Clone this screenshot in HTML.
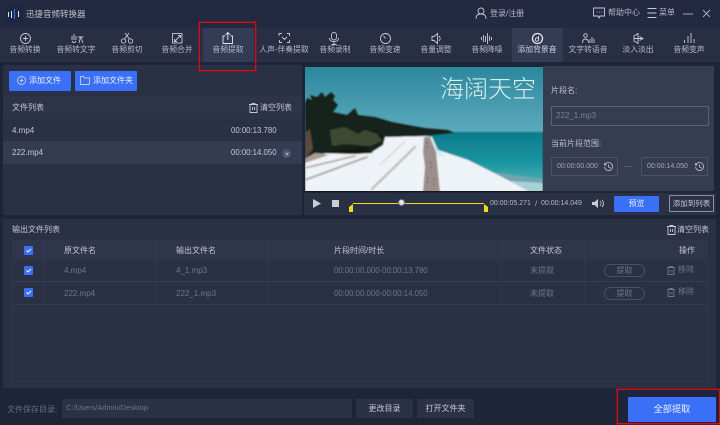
<!DOCTYPE html>
<html><head><meta charset="utf-8"><style>
*{box-sizing:border-box;margin:0;padding:0}
html,body{width:720px;height:425px;overflow:hidden;background:#1f2538}
body{position:relative;font-family:"Liberation Sans","Noto Sans CJK SC",sans-serif;font-size:8px;color:#c3c8d3}
.a{position:absolute;white-space:nowrap}
.b{position:absolute}
.t{position:absolute;top:44px;height:12px;line-height:12px;text-align:center;color:#b5bac6;transform:translateX(-50%);white-space:nowrap;font-size:7.8px}
svg{position:absolute;overflow:visible;fill:none;stroke:#c6cad4;stroke-width:.9}
.btn{position:absolute;background:#3a6ff7;color:#e8eeff;border-radius:1px;line-height:19px;font-size:8px}
.dim{color:#6f7689}
.vl{position:absolute;top:240px;width:1px;height:64px;background:#39405470}
.red{position:absolute;border:1px solid #d80c14;box-shadow:0 0 0 1px rgba(216,12,20,.35)}
</style></head><body>
<div class="b" style="left:0;top:0;width:720px;height:28px;background:#222940"></div>
<div class="b" style="left:0;top:28px;width:720px;height:34px;background:#282f45"></div>
<div class="b" style="left:5px;top:5px;width:18px;height:18px;background:#1c2744;border-radius:3px"></div>
<div class="b" style="left:8px;top:12px;width:1px;height:5px;background:#dfe3ec"></div>
<div class="b" style="left:11px;top:11px;width:1px;height:7px;background:#dfe3ec"></div>
<div class="b" style="left:14px;top:9px;width:1px;height:10px;background:#3a6ff7"></div>
<div class="b" style="left:18px;top:11px;width:1px;height:6px;background:#dfe3ec"></div>
<div class="a" style="left:26px;top:8px;line-height:12px;font-size:8.500px;color:#bdc2cd">迅捷音频转换器</div>
<svg style="left:475px;top:7px" width="12" height="13"><circle cx="6" cy="4" r="3"/><path d="M1 12c0-4 2-5 5-5s5 1 5 5"/></svg>
<div class="a" style="left:490px;top:8px;line-height:12px;color:#b5bac6">登录/注册</div>
<svg style="left:593px;top:7px" width="12" height="12"><path d="M.5 1h11v8H7l-1 2-1-2H.5z"/><path d="M3.500 5h1M6 5h1M8.500 5h1" stroke-width=".8"/></svg>
<div class="a" style="left:608px;top:7px;line-height:12px;color:#b5bac6">帮助中心</div>
<svg style="left:647px;top:8px" width="10" height="10"><path d="M.5 .5h9M.5 5h9M.5 9.500h9"/></svg>
<div class="a" style="left:659px;top:7px;line-height:12px;color:#b5bac6">菜单</div>
<svg style="left:683px;top:9px" width="34" height="10"><path d="M0 5h10M20 1l7 7M27 1l-7 7" stroke-width=".8"/></svg>

<div class="b" style="left:203px;top:28px;width:51px;height:34px;background:#343b54"></div>
<div class="b" style="left:512px;top:28px;width:51px;height:34px;background:#343b54"></div>
<div class="t" style="left:25px">音频转换</div><div class="t" style="left:76px">音频转文字</div><div class="t" style="left:127px">音频剪切</div><div class="t" style="left:177px">音频合并</div><div class="t" style="left:228px">音频提取</div><div class="t" style="left:284px">人声-伴奏提取</div><div class="t" style="left:335px">音频录制</div><div class="t" style="left:385px">音频变速</div><div class="t" style="left:436px">音量调整</div><div class="t" style="left:487px">音频降噪</div><div class="t" style="left:537px;color:#d0d4de">添加背景音</div><div class="t" style="left:588px">文字转语音</div><div class="t" style="left:638px">淡入淡出</div><div class="t" style="left:689px">音频变声</div>

<svg style="left:20px;top:33px" width="11" height="11"><circle cx="5.500" cy="5.500" r="5"/><path d="M3 5.500h5M5.500 3v5"/></svg>
<svg style="left:70px;top:33px" width="14" height="11"><path d="M2 7V3M4 7V1M6 7V3M2 8c1 2 3 2 4 0M8 4h5.500M10.500 4l-1.500 6M10.500 4l2.500 6"/></svg>
<svg style="left:121px;top:33px" width="12" height="11"><circle cx="2.500" cy="8" r="2.200"/><circle cx="9.500" cy="8" r="2.200"/><path d="M3.500 6L8 0M8.500 6L4 0"/></svg>
<svg style="left:172px;top:33px" width="11" height="11"><rect x=".5" y=".5" width="9.500" height="9.500"/><path d="M6 2.500h2.500V5M2.500 6v2.500H5M8 3L3 8"/></svg>
<svg style="left:222px;top:32px" width="12" height="12"><path d="M3 4H1v7.500h9.500V4H8.500M5.800 8V.8M3.500 2.800L5.800 .5l2.300 2.300" stroke="#e4e7ee"/></svg>
<svg style="left:279px;top:33px" width="11" height="10"><path d="M0 3V.5h3M8 .5h2.500V3M10.500 7v2.500H8M3 9.500H.5V7M3 4l2.500 2.500L8 4"/></svg>
<svg style="left:329px;top:32px" width="10" height="13"><rect x="2.500" y=".5" width="5" height="7.500" rx="2.500"/><path d="M.5 6c0 5 9 5 9 0M5 10v2.500M2.500 12.500h5"/></svg>
<svg style="left:380px;top:33px" width="11" height="11"><circle cx="5.500" cy="5.500" r="5"/><path d="M3.500 3l2 2.500"/></svg>
<svg style="left:431px;top:33px" width="11" height="11"><path d="M1 3.500h2L6.500 .5v10L3 7.500H1zM8 3c1.500 1.500 1.500 3.500 0 5"/></svg>
<svg style="left:481px;top:33px" width="11" height="11"><path d="M.5 4v3M2.500 2v7M4.500 3v6M6.500 0v11M8.500 3v5M10.500 4v3"/></svg>
<svg style="left:532px;top:33px" width="11" height="11"><circle cx="5.500" cy="5.500" r="5" stroke-width="1.300" stroke="#e4e7ee"/><circle cx="5" cy="6.500" r="1.700" stroke="#e4e7ee"/><path d="M6.500 6V3" stroke="#e4e7ee"/></svg>
<svg style="left:582px;top:33px" width="13" height="11"><circle cx="3.500" cy="2.500" r="1.800"/><path d="M.5 10c0-3 1-4 3-4s3 1 3 4M8 6v4M10 4v6M12 6v4"/></svg>
<svg style="left:633px;top:33px" width="11" height="11"><path d="M5 .5L1 3v5l4 2.500zM6.500 3.500l3.500 2-3.500 2M1 5.500h8"/></svg>
<svg style="left:684px;top:33px" width="11" height="11"><path d="M.5 7v3M4 3v7M7 0v10M10 6v4"/></svg>

<div class="b" style="left:3px;top:65px;width:299px;height:150px;background:#2a3145"></div>
<div class="btn" style="left:9px;top:71px;width:62px;height:20px;padding-left:20px">添加文件</div>
<svg style="left:17px;top:76px" width="9" height="9"><circle cx="4.500" cy="4.500" r="4"/><path d="M2.500 4.500h4M4.500 2.500v4"/></svg>
<div class="btn" style="left:75px;top:71px;width:62px;height:20px;padding-left:18px">添加文件夹</div>
<svg style="left:80px;top:76px" width="10" height="9"><path d="M.5 .5h3l1 1.500h5v6.500H.5z"/></svg>
<div class="b" style="left:3px;top:96px;width:299px;height:23px;background:#2d3449"></div>
<div class="a" style="left:12px;top:103px;line-height:10px">文件列表</div>
<svg style="left:249px;top:103px" width="9" height="10"><path d="M0 1.500h9M3 1.500V.5h3v1M1 1.500v8h7v-8M3.500 4v3M5.500 4v3"/></svg>
<div class="a" style="left:260px;top:103px;line-height:10px">清空列表</div>
<div class="b" style="left:3px;top:141px;width:299px;height:23px;background:#343c52"></div>
<div class="a" style="left:12px;top:126px;line-height:10px">4.mp4</div>
<div class="a" style="left:231px;top:126px;line-height:10px;font-size:7.800px">00:00:13.780</div>
<div class="a" style="left:12px;top:148px;line-height:10px">222.mp4</div>
<div class="a" style="left:231px;top:148px;line-height:10px;font-size:7.800px">00:00:14.050</div>
<div class="b" style="left:282px;top:149px;width:9px;height:9px;border-radius:50%;background:#4a5372"></div>
<svg style="left:284.500px;top:151.500px" width="4" height="4"><path d="M.5 .5l3 3M3.500 .5l-3 3" stroke-width=".7"/></svg>

<!-- video -->
<svg style="left:305px;top:67px;stroke:none;overflow:hidden" width="238" height="125" viewBox="0 0 238 125">
<defs>
<linearGradient id="s" x1="0" y1="0" x2="0" y2="1"><stop offset="0" stop-color="#2b879d"/><stop offset="1" stop-color="#5dabbd"/></linearGradient>
<linearGradient id="w" x1="0" y1="0" x2="0" y2="1"><stop offset="0" stop-color="#0f7a8c"/><stop offset=".45" stop-color="#15929e"/><stop offset="1" stop-color="#59b7ba"/></linearGradient>
<filter id="bl"><feGaussianBlur stdDeviation=".8"/></filter>
</defs>
<rect width="238" height="66" fill="url(#s)"/>
<g filter="url(#bl)">
<rect y="65" width="238" height="60" fill="url(#w)"/>
<path d="M133 83L163 93 197 110 238 116V125H190L145 95z" fill="#a5d3d5"/>
<path d="M180 104L238 112V116L205 114z" fill="#6fa5b0"/>
<path d="M0 92L80 70 120 69 127 70 133 83 163 93 197 110 225 125H0z" fill="#eef3f7"/>
<path d="M127 72L133 83 142 90 132 88z" fill="#d8e9ec"/>
<path d="M119 70L125 70 131 85 135 125H118L120 100 118 85z" fill="#9b8f8b"/>
<path d="M122 75v8M126 95v8M123 110v8M129 112v8" stroke="#5b4f4d" stroke-width="1.200" stroke-dasharray="1.500 3" fill="none"/>
<g stroke="#b5abaa" fill="none" stroke-linecap="round">
<path d="M0 101L50 89" stroke-width="1.800"/><path d="M0 113L62 90" stroke-width="2"/><path d="M67 122L110 80" stroke-width="2.500" stroke="#c6bebd"/>
<path d="M75 98L100 74" stroke-width="1" stroke="#d2cccc"/></g>
<path d="M0 36L2 31 7 33 5 28 12 30 17 25 20 30 26 25 30 29 28 33 33 38 28 45 42 48 50 41 53 48 70 50 87 55 103 58 120 61 143 63 150 66 120 69 80 70 78 78 67 85 50 86 10 86 0 91z" fill="#18241b"/>
<path d="M25 63L40 60 53 67 60 63 72 67 77 74 65 79 53 78 40 77 27 79z" fill="#3c4a31"/>
<path d="M10 86L60 80 68 86 50 87z" fill="#171510"/>
<path d="M0 66L5 62 8 82 0 92z" fill="#5a4a3e"/>
<path d="M0 92L10 86 24 88 0 96z" fill="#b09c8f"/>
</g>
<rect y="124" width="238" height="1" fill="#16181c"/>
</svg>
<div class="a" style="left:440px;top:76px;font-size:24px;line-height:28px;color:#dcecef;font-weight:300">海阔天空</div>

<div class="b" style="left:543px;top:66px;width:171px;height:125px;background:#363c52"></div>
<div class="a" style="left:551px;top:86px;line-height:10px;color:#bcc0cb">片段名:</div>
<div class="b" style="left:551px;top:106px;width:158px;height:20px;border:1px solid #5b6277;border-radius:1px"></div>
<div class="a" style="left:556px;top:111px;line-height:10px;font-size:8px;color:#7c8294">222_1.mp3</div>
<div class="a" style="left:551px;top:139px;line-height:10px;color:#bcc0cb">当前片段范围:</div>
<div class="b" style="left:551px;top:157px;width:67px;height:19px;border:1px solid #4c5369;border-radius:1px"></div>
<div class="a" style="left:557px;top:162px;line-height:10px;font-size:7px;color:#a3a8b6">00:00:00.000</div>
<svg style="left:604px;top:162px" width="9" height="9"><path d="M1 2.500A4 4 0 1 1 .5 5M.5 1v2h2M4.500 2.500V5l2 1" stroke-width=".8"/></svg>
<div class="b" style="left:625px;top:166px;width:8px;height:1px;background:#545b70"></div>
<div class="b" style="left:641px;top:157px;width:67px;height:19px;border:1px solid #4c5369;border-radius:1px"></div>
<div class="a" style="left:647px;top:162px;line-height:10px;font-size:7px;color:#a3a8b6">00:00:14.050</div>
<svg style="left:695px;top:162px" width="9" height="9"><path d="M1 2.500A4 4 0 1 1 .5 5M.5 1v2h2M4.500 2.500V5l2 1" stroke-width=".8"/></svg>

<div class="b" style="left:304px;top:193px;width:412px;height:22px;background:#2a3145"></div>
<svg style="left:313px;top:199px;stroke:none" width="27" height="9"><path d="M0 0l8 4.500L0 9z" fill="#c9cdd6"/><rect x="19" y="1" width="7" height="7" fill="#c9cdd6"/></svg>
<svg style="left:349px;top:202px;stroke:none" width="140" height="11"><path d="M4 1.500H135" stroke="#f2dc1a" stroke-width="1"/><path d="M0 10V5L4 2V10zM135 2V10H139V5z" fill="#f2dc1a"/></svg>
<div class="b" style="left:399px;top:200px;width:5px;height:5px;border-radius:50%;background:#e8e8ee;box-shadow:0 0 0 1px #6b7183"></div>
<div class="a" style="left:490px;top:199px;line-height:10px;font-size:7px;color:#b5bac6">00:00:05.271</div>
<div class="a" style="left:535px;top:199px;line-height:10px;font-size:7.500px;color:#b5bac6">/</div>
<div class="a" style="left:541px;top:199px;line-height:10px;font-size:7px;color:#b5bac6">00:00:14.049</div>
<svg style="left:592px;top:199px;stroke:none" width="12" height="9"><path d="M0 3h2.500L6 0v9L2.500 6H0z" fill="#c9cdd6"/><path d="M8 2c1.500 1.500 1.500 3.500 0 5M10 1c2 2 2 5 0 7" stroke="#c9cdd6" stroke-width=".8" fill="none"/></svg>
<div class="btn" style="left:614px;top:196px;width:45px;height:16px;line-height:16px;text-align:center">预览</div>
<div class="a" style="left:669px;top:195px;width:45px;height:17px;line-height:15px;text-align:center;border:1px solid #8c91a0;border-radius:1px;font-size:7.500px;color:#c3c8d3">添加到列表</div>

<!-- lower panel -->
<div class="b" style="left:3px;top:219px;width:713px;height:169px;background:#2a3145"></div>
<div class="a" style="left:12px;top:225px;line-height:10px">输出文件列表</div>
<svg style="left:667px;top:225px" width="9" height="10"><path d="M0 1.500h9M3 1.500V.5h3v1M1 1.500v8h7v-8M3.500 4v3M5.500 4v3"/></svg>
<div class="a" style="left:677px;top:225px;line-height:10px">清空列表</div>
<div class="b" style="left:12px;top:240px;width:696px;height:142px;border:1px solid #333a4f;border-top:none"></div>
<div class="b" style="left:12px;top:240px;width:696px;height:20px;background:#2f364b"></div>
<div class="b" style="left:12px;top:281px;width:696px;height:1px;background:#363d52"></div>
<div class="b" style="left:12px;top:304px;width:696px;height:1px;background:#363d52"></div>
<div class="vl" style="left:44px"></div><div class="vl" style="left:156px"></div><div class="vl" style="left:268px"></div><div class="vl" style="left:501px"></div><div class="vl" style="left:584px"></div>
<div class="a" style="left:64px;top:246px;line-height:10px">原文件名</div>
<div class="a" style="left:176px;top:246px;line-height:10px">输出文件名</div>
<div class="a" style="left:334px;top:246px;line-height:10px">片段时间/时长</div>
<div class="a" style="left:530px;top:246px;line-height:10px">文件状态</div>
<div class="a" style="left:679px;top:246px;line-height:10px">操作</div>
<div class="b" style="left:24px;top:246px;width:9px;height:9px;background:#3a6ff7;border-radius:1px"></div>
<div class="b" style="left:24px;top:266px;width:9px;height:9px;background:#3a6ff7;border-radius:1px"></div>
<div class="b" style="left:24px;top:288px;width:9px;height:9px;background:#3a6ff7;border-radius:1px"></div>
<svg style="left:24px;top:246px" width="9" height="51"><path d="M2.500 4.500L4 6l3-3M2.500 24.500L4 26l3-3M2.500 46.500L4 48l3-3" stroke="#fff"/></svg>
<div class="a dim" style="left:64px;top:266px;line-height:10px">4.mp4</div>
<div class="a dim" style="left:176px;top:266px;line-height:10px">4_1.mp3</div>
<div class="a dim" style="left:334px;top:266px;line-height:10px;font-size:7.800px">00:00:00.000-00:00:13.780</div>
<div class="a dim" style="left:530px;top:266px;line-height:10px">未提取</div>
<div class="a dim" style="left:604px;top:264px;width:41px;height:13px;line-height:11px;text-align:center;border:1px solid #4a5166;border-radius:7px">提取</div>
<svg style="left:667px;top:266px;stroke:#6f7689" width="8" height="9"><path d="M0 1.500h8M2.500 1.500V.5h3v1M1 1.500v7h6v-7M3 4v2.500M5 4v2.500"/></svg>
<div class="a dim" style="left:678px;top:265px;line-height:10px">移除</div>
<div class="a dim" style="left:64px;top:289px;line-height:10px">222.mp4</div>
<div class="a dim" style="left:176px;top:289px;line-height:10px">222_1.mp3</div>
<div class="a dim" style="left:334px;top:289px;line-height:10px;font-size:7.800px">00:00:00.000-00:00:14.050</div>
<div class="a dim" style="left:530px;top:289px;line-height:10px">未提取</div>
<div class="a dim" style="left:604px;top:287px;width:41px;height:13px;line-height:11px;text-align:center;border:1px solid #4a5166;border-radius:7px">提取</div>
<svg style="left:667px;top:288px;stroke:#6f7689" width="8" height="9"><path d="M0 1.500h8M2.500 1.500V.5h3v1M1 1.500v7h6v-7M3 4v2.500M5 4v2.500"/></svg>
<div class="a dim" style="left:678px;top:287px;line-height:10px">移除</div>

<!-- bottom -->
<div class="a" style="left:7px;top:404px;line-height:12px;color:#666d80">文件保存目录:</div>
<div class="b" style="left:62px;top:399px;width:290px;height:19px;background:#2b3246"></div>
<div class="a" style="left:66px;top:403px;line-height:10px;font-size:7.500px;color:#6f7689">C:/Users/Admin/Desktop</div>
<div class="b" style="left:356px;top:399px;width:57px;height:19px;background:#2b3246;text-align:center;line-height:19px">更改目录</div>
<div class="b" style="left:417px;top:399px;width:57px;height:19px;background:#2b3246;text-align:center;line-height:19px">打开文件夹</div>
<div class="btn" style="left:628px;top:397px;width:88px;height:25px;line-height:25px;text-align:center;font-size:9.200px;color:#eef2ff;background:#3a6ff7">全部提取</div>

<!-- red boxes -->
<div class="red" style="left:199px;top:22px;width:57px;height:49px"></div>
<div class="red" style="left:617px;top:389px;width:103px;height:35px"></div>
</body></html>
